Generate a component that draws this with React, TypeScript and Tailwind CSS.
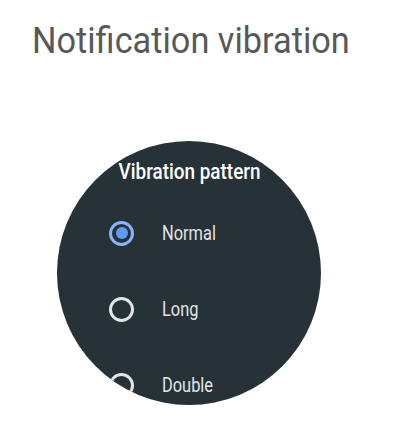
export default function App() {
  const options = [
    { label: "Normal", checked: true },
    { label: "Long", checked: false },
    { label: "Double", checked: false },
  ];

  return (
    <div className="w-[400px] h-[441px] bg-white overflow-hidden font-['Roboto',sans-serif]">
      <h1 className="pl-[32px] pt-[18px] h-[62px] text-[37.5px] leading-[44px] text-[#585858] font-normal whitespace-nowrap">
        <span className="inline-block origin-left scale-x-[0.915]">Notification vibration</span>
      </h1>

      <div className="ml-[57px] mt-[79px] w-[264px] h-[264px] rounded-full bg-[#263238] overflow-hidden">
        <div className="pt-[17px] h-[43px] text-center text-[22.5px] leading-[26px] text-white font-medium whitespace-nowrap">
          <span className="inline-block scale-x-[0.84]">Vibration pattern</span>
        </div>
        <ul className="mt-[36px] pl-[52px] flex flex-col gap-[50px]">
          {options.map((o) => (
            <li key={o.label} className="flex items-center h-[26px]">
              {o.checked ? (
                <span className="shrink-0 w-[25px] h-[25px] rounded-full border-[3px] border-[#8ab4f8] flex items-center justify-center">
                  <span className="w-[12px] h-[12px] rounded-full bg-[#5e9bf7]" />
                </span>
              ) : (
                <span className="shrink-0 w-[25px] h-[25px] rounded-full border-[3px] border-[#e3e5e6]" />
              )}
              <span className="ml-[28px] text-[20.5px] leading-[26px] text-[#e2e4e5] whitespace-nowrap">
                <span className="inline-block origin-left scale-x-[0.8]">{o.label}</span>
              </span>
            </li>
          ))}
        </ul>
      </div>
    </div>
  );
}
